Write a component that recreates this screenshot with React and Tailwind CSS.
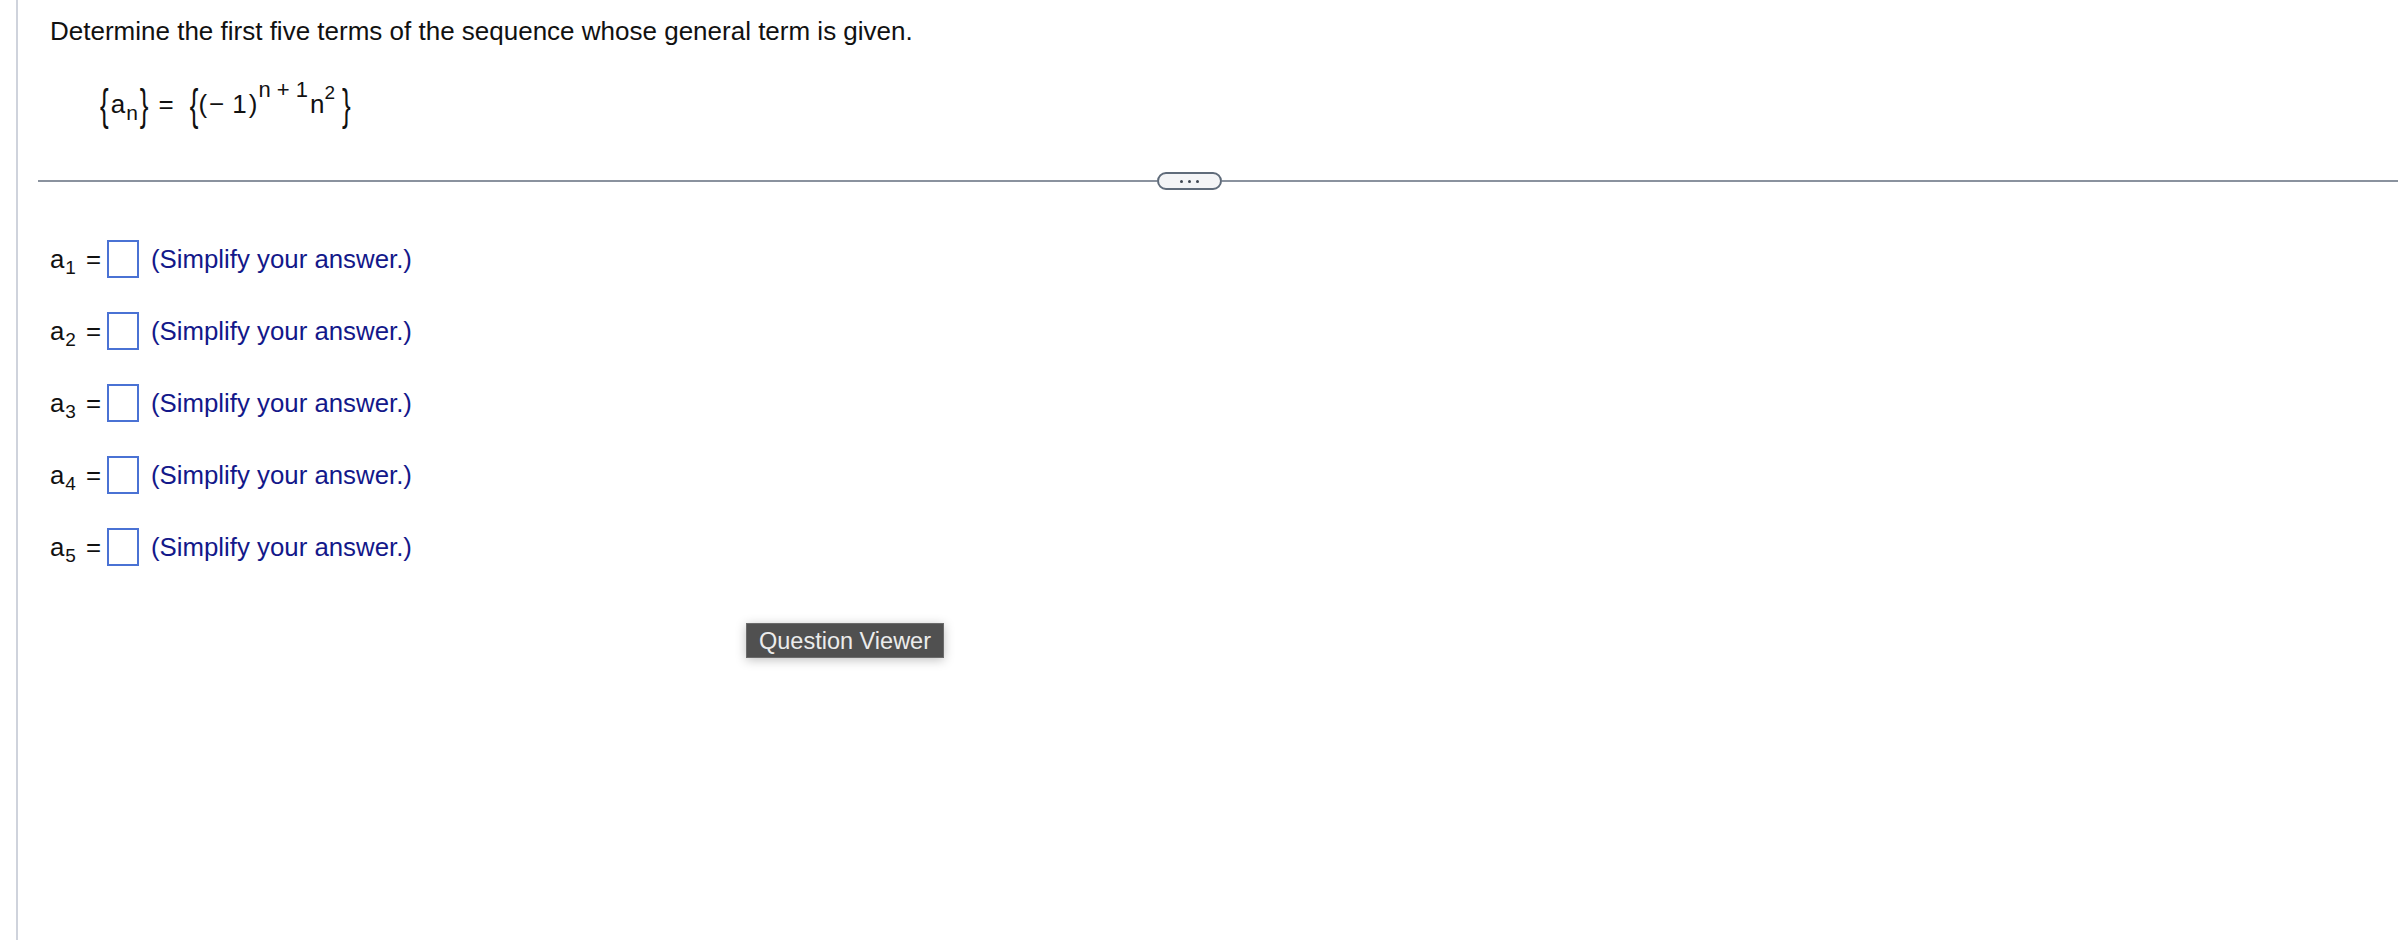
function Term({ n }) {
    return (
        <div className="flex items-center h-[38px]">
            <div className="w-[57px] flex items-baseline text-[25.8px] text-[#111]">
                <span>a</span>
                <span className="text-[19px] relative top-[6px] ml-[1px]">{n}</span>
                <span className="ml-[10px]">=</span>
            </div>
            <div className="w-[32px] h-[38px] border-2 border-[#4a72d4] bg-white" />
            <span className="ml-[12px] text-[25.8px] text-[#13188a]">
                (Simplify your answer.)
            </span>
        </div>
    );
}

export default function App() {
    const terms = [1, 2, 3, 4, 5];

    return (
        <div
            className="w-full h-[940px] bg-white pl-4"
            style={{ fontFamily: '"Liberation Sans", Arial, sans-serif' }}
        >
            <div className="h-full border-l-2 border-[#cfd3dc]">

                <div className="pl-[32px] pt-[16px]">
                    <p className="text-[26px] leading-[30px] text-[#111]">
                        Determine the first five terms of the sequence whose general term is given.
                    </p>

                    <div className="mt-[39px] ml-[50px] flex items-baseline text-[26px] leading-[39px] text-[#111]">
                        <span className="inline-block scale-y-[1.7] relative top-[1px]">{"{"}</span>
                        <span className="ml-[2px]">a</span>
                        <span className="text-[21px] relative top-[7px] ml-[1px]">n</span>
                        <span className="inline-block scale-y-[1.7] relative top-[1px] ml-[2px]">{"}"}</span>
                        <span className="ml-[10px]">=</span>
                        <span className="inline-block scale-y-[1.7] relative top-[1px] ml-[16px]">{"{"}</span>
                        <span>(</span>
                        <span className="ml-[2px]">−</span>
                        <span className="ml-[8px]">1</span>
                        <span className="ml-[2px]">)</span>
                        <span className="text-[22px] relative -top-[16px] ml-[1px]">n + 1</span>
                        <span className="ml-[2px]">n</span>
                        <span className="text-[19px] relative -top-[14px]">2</span>
                        <span className="inline-block scale-y-[1.7] relative top-[1px] ml-[7px]">{"}"}</span>
                    </div>
                </div>

                <div className="mt-[46px] flex items-center h-[18px]">
                    <div className="w-[20px]" />
                    <div className="w-[1119px] h-[2px] bg-[#8a929e]" />
                    <div className="w-[65px] h-[18px] rounded-full border-2 border-[#5f6b7a] bg-[#f3f4f6] flex items-center justify-center gap-[5px]">
                        <span className="w-[3px] h-[3px] rounded-full bg-[#3f4752]" />
                        <span className="w-[3px] h-[3px] rounded-full bg-[#3f4752]" />
                        <span className="w-[3px] h-[3px] rounded-full bg-[#3f4752]" />
                    </div>
                    <div className="flex-1 h-[2px] bg-[#8a929e]" />
                </div>

                <div className="pl-[32px] mt-[50px] flex flex-col gap-[34px]">
                    {terms.map((n) => (
                        <Term key={n} n={n} />
                    ))}
                </div>

                <div className="ml-[728px] mt-[57px]">
                    <button className="w-[198px] h-[35px] bg-[#505050] border border-[#6b6b6b] text-[#ececec] text-[23.5px] shadow-[0_2px_10px_rgba(0,0,0,0.25)]">
                        Question Viewer
                    </button>
                </div>

            </div>
        </div>
    );
}
